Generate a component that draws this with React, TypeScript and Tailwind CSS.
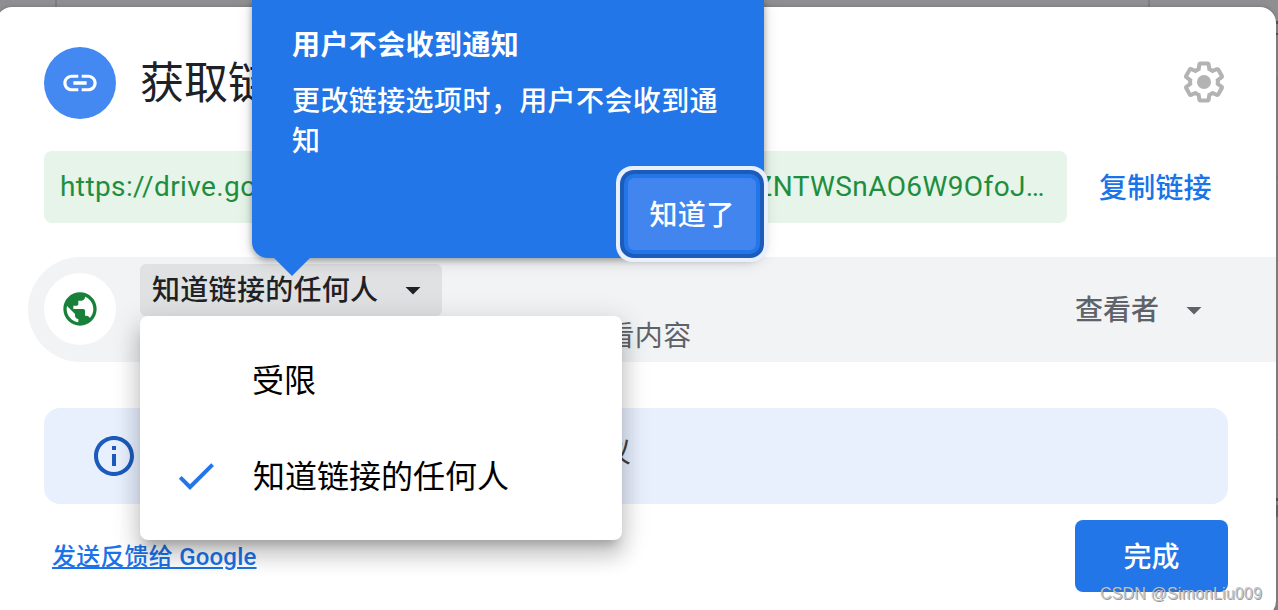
import React from 'react';
import { MdArrowDropDown, MdCheck, MdInfoOutline, MdLink, MdPublic } from 'react-icons/md';

function GearIcon() {
  return (
    <svg viewBox="0 0 24 24" className="size-12 fill-[#b3b3b3]">
      <path d="M13.85 22.25h-3.7c-.74 0-1.36-.54-1.45-1.27l-.27-1.89c-.27-.14-.53-.29-.79-.46l-1.8.72c-.7.26-1.47-.03-1.81-.65L2.2 15.53c-.35-.66-.2-1.44.36-1.88l1.53-1.19c-.01-.15-.02-.3-.02-.46 0-.15.01-.31.02-.46l-1.52-1.19c-.59-.45-.74-1.26-.37-1.88l1.85-3.19c.34-.62 1.11-.9 1.79-.63l1.81.73c.26-.17.52-.32.78-.46l.27-1.91c.09-.7.71-1.25 1.44-1.25h3.7c.74 0 1.36.54 1.45 1.27l.27 1.89c.27.14.53.29.79.46l1.8-.72c.71-.26 1.48.03 1.82.65l1.84 3.18c.36.66.2 1.44-.36 1.88l-1.52 1.19c.01.15.02.3.02.46s-.01.31-.02.46l1.52 1.19c.56.45.72 1.23.37 1.86l-1.86 3.22c-.34.62-1.11.9-1.8.63l-1.8-.72c-.26.17-.52.32-.78.46l-.27 1.91c-.1.68-.72 1.22-1.46 1.22zm-3.23-2h2.76l.37-2.55.53-.22c.44-.18.88-.44 1.34-.78l.45-.34 2.38.96 1.38-2.4-2.03-1.58.07-.56c.03-.26.06-.51.06-.78s-.03-.53-.06-.78l-.07-.56 2.03-1.58-1.39-2.4-2.39.96-.45-.35c-.42-.32-.87-.58-1.33-.77l-.52-.22-.37-2.55h-2.76l-.37 2.55-.53.21c-.44.19-.88.44-1.34.79l-.45.33-2.38-.95-1.39 2.39 2.03 1.58-.07.56a7 7 0 0 0-.06.79c0 .26.02.53.06.78l.07.56-2.03 1.58 1.38 2.4 2.39-.96.45.35c.43.33.86.58 1.33.77l.53.22.38 2.55z" />
      <circle cx="12" cy="12" r="3.5" />
    </svg>
  );
}

function Tooltip() {
  return (
    <div className="absolute top-0 left-[252px] h-[258px] w-[512px] rounded-b-2xl bg-[#2276e7] px-10 pt-[26px] text-[28px] leading-10 tracking-[0.4px] text-white shadow-[0_2px_6px_rgba(0,0,0,0.3),0_4px_16px_rgba(0,0,0,0.15)]">
      <div className="font-bold">用户不会收到通知</div>
      <p className="mt-4 w-[432px] font-medium">更改链接选项时，用户不会收到通知</p>
      <button className="absolute top-[178px] left-[376px] flex h-[72px] w-32 items-center justify-center rounded-md bg-[#4285ee] pt-1 font-medium shadow-[0_0_0_4px_#2276e7,0_0_0_8px_#1c5bb9,0_0_0_12px_#e8f0fe]">
        知道了
      </button>
      <svg viewBox="0 0 36 18" className="absolute top-[258px] left-[22px] h-[18px] w-9 fill-[#2276e7]">
        <path d="M0 0h36L18 18z" />
      </svg>
    </div>
  );
}

function Menu() {
  return (
    <div className="absolute top-[316px] left-[140px] flex h-56 w-[482px] flex-col rounded-lg bg-white py-4 text-[32px] text-black shadow-[0_10px_10px_-6px_rgba(0,0,0,0.2),0_16px_20px_2px_rgba(0,0,0,0.14),0_6px_28px_4px_rgba(0,0,0,0.12)]">
      <div className="flex h-24 items-center pl-8">
        <span className="w-20" />
        <span className="pt-0.5">受限</span>
      </div>
      <div className="flex h-24 items-center pl-8">
        <span className="w-[81px]">
          <MdCheck className="size-12 text-[#2276e7]" />
        </span>
        <span className="pt-0.5">知道链接的任何人</span>
      </div>
    </div>
  );
}

export default function App() {
  return (
    <div className="relative h-[610px] w-[1278px] overflow-hidden bg-[#8f8f91] pt-[7px] font-['Roboto','Noto_Sans_CJK_SC',sans-serif]">
      <div className="absolute top-0 left-[55px] h-2 w-0.5 bg-[#7b7e83]" />
      <div className="absolute top-0 left-[1148px] h-2 w-0.5 bg-[#7b7e83]" />
      <div className="absolute top-0 right-0 h-full w-2 bg-[#858585]" />
      <div className="absolute top-0 right-0 h-5 w-6 bg-[#8f8f91]" />
      <div className="relative -ml-1 h-[610px] w-[1280px] rounded-2xl bg-white pt-10 pl-12 shadow-[0_0_4px_rgba(0,0,0,0.2)]">
        <header className="flex h-[72px] items-center pr-12">
          <div className="flex size-[72px] items-center justify-center rounded-full bg-[#4488f1]">
            <MdLink className="size-10 text-white" />
          </div>
          <h1 className="ml-6 pt-0.5 text-[44px] leading-[72px] text-[#202124]">获取链接</h1>
          <span className="mt-[-2px] ml-auto">
            <GearIcon />
          </span>
        </header>

        <div className="mt-8 flex h-[72px] items-center">
          <div className="flex h-[72px] w-[1023px] items-center justify-between rounded-lg bg-[#e6f4ea] pr-[22px] pl-4 text-[28px] tracking-[0.4px] text-[#1e8e3e]">
            <span>https://drive.google.com/</span>
            <span>ZNTWSnAO6W9OfoJ…</span>
          </div>
          <span className="ml-8 pt-1 text-[28px] font-medium tracking-[0.2px] text-[#1a73e8]">复制链接</span>
        </div>

        <div className="mt-[34px] -ml-4 flex h-[105px] rounded-l-full bg-[#f1f3f4] pl-4">
          <div className="mt-4 flex size-[72px] items-center justify-center rounded-full bg-white">
            <MdPublic className="size-10 text-[#188038]" />
          </div>
          <div className="ml-6 pt-[7px]">
            <div className="flex h-[52px] w-[302px] items-center justify-between rounded-md bg-[#dfe1e2] pr-[11px] pl-3 text-[28px] font-medium tracking-[0.3px] text-[#202124]">
              <span className="pt-0.5">知道链接的任何人</span>
              <MdArrowDropDown className="size-9" />
            </div>
            <p className="pt-px pl-3 text-[28px] leading-10 tracking-[0.4px] whitespace-nowrap text-[#5f6368]">
              互联网上获得此链接的任何人都能查看内容
            </p>
          </div>
          <div className="mr-16 ml-auto flex items-center gap-[17px] text-[28px] font-medium text-[#5f6368]">
            <span className="pt-0.5">查看者</span>
            <MdArrowDropDown className="size-9" />
          </div>
        </div>

        <div className="mt-[46px] flex h-24 w-[1184px] items-center rounded-2xl bg-[#e8f0fe] pl-[46px]">
          <MdInfoOutline className="size-12 text-[#1b5bbb]" />
          <span className="mt-[-6px] w-[493px] text-right text-[28px] tracking-[0.4px] text-[#3c4043]">
            此内容的查看者能够看到评论和建议
          </span>
        </div>

        <footer className="mt-4 flex h-[72px] items-center justify-between pr-12 pl-2">
          <a className="pt-0.5 text-2xl font-medium tracking-[0.2px] text-[#1a73e8] underline">发送反馈给 Google</a>
          <button className="h-[72px] w-[153px] rounded-lg bg-[#2276e7] pt-1 text-[28px] font-medium text-white">完成</button>
        </footer>
      </div>

      <div className="absolute top-[21px] right-0 h-[3px] w-0.5 bg-[#4b4d50]" />
      <div className="absolute top-[33px] right-0 h-0.5 w-0.5 bg-[#4b4d50]" />
      <div className="absolute top-[78px] right-0 h-0.5 w-0.5 bg-[#74777c]" />
      <div className="absolute top-[176px] right-0 h-0.5 w-0.5 bg-[#74777c]" />
      <div className="absolute top-[434px] right-0 h-0.5 w-0.5 bg-[#74777c]" />
      <div className="absolute top-[498px] right-0 h-[3px] w-0.5 bg-[#4b4d50]" />
      <div className="absolute top-[505px] right-0 h-3 w-0.5 bg-[#5f6063]" />

      <Menu />
      <Tooltip />
      <div className="absolute top-[584px] left-[1100px] font-['Liberation_Sans',sans-serif] text-[16px] leading-5 tracking-[0.15px] whitespace-nowrap text-[#c4c4c4] [text-shadow:1px_1px_0_rgba(90,90,90,0.6)]">
        CSDN @SimonLiu009
      </div>
    </div>
  );
}
